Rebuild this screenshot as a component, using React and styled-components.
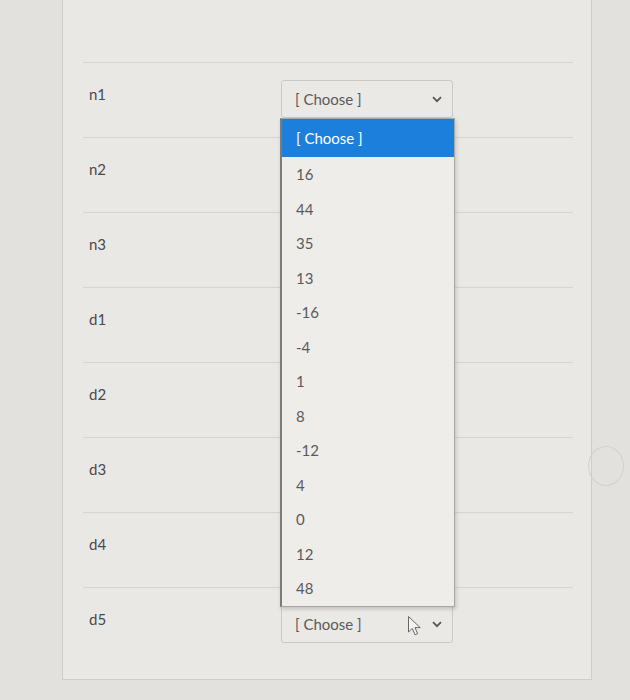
import React from "react";
import styled, { createGlobalStyle } from "styled-components";

const GlobalStyle = createGlobalStyle`
  html, body {
    margin: 0;
    padding: 0;
    background: #e3e1de;
    font-family: Lato, "Open Sans", sans-serif;
  }
`;

const Page = styled.div`
  position: relative;
  width: 630px;
  height: 700px;
  overflow: hidden;
`;

const Panel = styled.div`
  margin-left: 62px;
  width: 530px;
  height: 680px;
  background: #eae8e5;
  border: 1px solid #cfccc9;
  border-top: none;
  box-sizing: border-box;
  padding-top: 62px;
`;

const Row = styled.div`
  border-top: 1px solid #d6d3d0;
  margin: 0 18px 0 20px;
  height: 75px;
  display: flex;
  box-sizing: border-box;
`;

const Label = styled.div`
  width: 198px;
  padding: 22px 0 0 6px;
  font-size: 15px;
  color: #4a4a4a;
  box-sizing: border-box;
`;

const SelectWrap = styled.div`
  position: relative;
  margin-top: 17px;
  height: 38px;
`;

const Select = styled.div`
  width: 172px;
  height: 38px;
  box-sizing: border-box;
  border: 1px solid #cbc8c5;
  border-radius: 3px;
  background: #ebe9e6;
  display: flex;
  align-items: center;
  justify-content: space-between;
  padding: 0 9px 0 13px;
  font-size: 15px;
  color: #5a5a5a;
  visibility: ${(p) => (p.covered ? "hidden" : "visible")};
`;

const Chevron = styled.svg`
  width: 12px;
  height: 12px;
`;

const List = styled.ul`
  position: absolute;
  top: 38px;
  left: -1px;
  width: 172px;
  margin: 0;
  padding: 0;
  list-style: none;
  background: #efedea;
  border: 1px solid #a9a6a3;
  border-left: 2px solid #7d7b79;
  box-shadow: 1px 2px 4px rgba(0, 0, 0, 0.18);
  z-index: 2;
`;

const Item = styled.li`
  height: ${(p) => (p.active ? "38px" : "34.5px")};
  display: flex;
  align-items: center;
  padding-left: 14px;
  font-size: 15px;
  color: ${(p) => (p.active ? "#ffffff" : "#5a5a5a")};
  background: ${(p) => (p.active ? "#1d7fdc" : "transparent")};
`;

const Cursor = styled.svg`
  position: absolute;
  right: 30px;
  top: 10px;
  width: 16px;
  height: 22px;
`;

const Ring = styled.div`
  position: absolute;
  left: 588px;
  top: 446px;
  width: 34px;
  height: 38px;
  border: 1px solid #d3d0cd;
  border-radius: 50%;
`;

const labels = ["n1", "n2", "n3", "d1", "d2", "d3", "d4", "d5"];
const options = ["16", "44", "35", "13", "-16", "-4", "1", "8", "-12", "4", "0", "12", "48"];

const Arrow = () => (
  <Chevron viewBox="0 0 12 12">
    <path d="M2 4.2 L6 8.2 L10 4.2" fill="none" stroke="#555" strokeWidth="1.7" />
  </Chevron>
);

export default function App() {
  const last = labels.length - 1;
  return (
    <Page>
      <GlobalStyle />
      <Panel>
        {labels.map((l, i) => (
          <Row key={l}>
            <Label>{l}</Label>
            <SelectWrap>
              <Select covered={i > 0 && i < last}>
                <span>[ Choose ]</span>
                <Arrow />
              </Select>
              {i === 0 && (
                <List>
                  <Item active>[ Choose ]</Item>
                  {options.map((o) => (
                    <Item key={o}>{o}</Item>
                  ))}
                </List>
              )}
              {i === last && (
                <Cursor viewBox="0 0 16 22">
                  <path
                    d="M1.5 1.5 L1.5 17 L5.3 13.4 L8 19.8 L10.6 18.7 L8 12.6 L13.2 12.6 Z"
                    fill="#f4f4f4"
                    stroke="#666"
                    strokeWidth="1"
                    strokeLinejoin="round"
                  />
                </Cursor>
              )}
            </SelectWrap>
          </Row>
        ))}
      </Panel>
      <Ring />
    </Page>
  );
}
